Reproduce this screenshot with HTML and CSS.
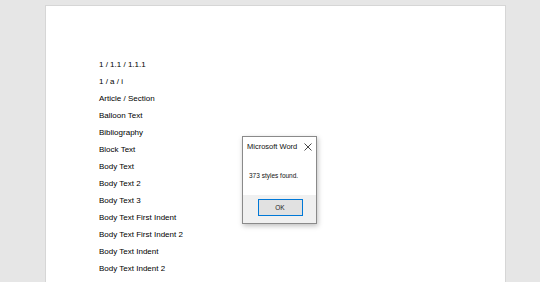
FILE: index.html
```html
<!DOCTYPE html>
<html>
<head>
<meta charset="utf-8">
<link rel="stylesheet" href="styles.css">
</head>
<body>
<div class="page">
  <ul class="styles">
    <li>1 / 1.1 / 1.1.1</li>
    <li>1 / a / i</li>
    <li>Article / Section</li>
    <li>Balloon Text</li>
    <li>Bibliography</li>
    <li>Block Text</li>
    <li>Body Text</li>
    <li>Body Text 2</li>
    <li>Body Text 3</li>
    <li>Body Text First Indent</li>
    <li>Body Text First Indent 2</li>
    <li>Body Text Indent</li>
    <li>Body Text Indent 2</li>
  </ul>
</div>
<div class="dialog">
  <div class="title">
    <span>Microsoft Word</span>
    <svg class="close" width="8" height="8" viewBox="0 0 8 8"><path d="M0.5 0.5L7.5 7.5M7.5 0.5L0.5 7.5" stroke="#333" stroke-width="0.9" fill="none"/></svg>
  </div>
  <div class="msg">373 styles found.</div>
  <div class="footer"><button class="ok">OK</button></div>
</div>
</body>
</html>
```
FILE: styles.css
```css
html, body { margin: 0; padding: 0; }
body {
  background: #e6e6e6;
  width: 540px;
  height: 282px;
  overflow: hidden;
  font-family: "Liberation Sans", Arial, sans-serif;
  color: #222;
}
.page {
  margin: 5px 0 0 45px;
  width: 461px;
  height: 290px;
  background: #fff;
  border: 1px solid #d6d6d6;
  box-sizing: border-box;
  padding: 50px 0 0 53px;
}
.styles {
  list-style: none;
  margin: 0;
  padding: 0;
  font-size: 8px;
  line-height: 17px;
  color: #000;
}
.dialog {
  position: absolute;
  left: 242px;
  top: 136px;
  width: 75px;
  height: 88px;
  box-sizing: border-box;
  border: 1px solid #8a8a8a;
  background: #fff;
  box-shadow: 1px 2px 5px rgba(0,0,0,0.25);
  display: flex;
  flex-direction: column;
}
.title {
  display: flex;
  justify-content: space-between;
  align-items: center;
  padding: 2px 4px 0 4px;
  height: 17px;
  box-sizing: border-box;
  font-size: 7.5px;
  white-space: nowrap;
  color: #111;
}
.msg {
  padding: 18px 0 0 6px;
  height: 41px;
  box-sizing: border-box;
  font-size: 6.5px;
  white-space: nowrap;
  color: #111;
}
.footer {
  flex: 1;
  background: #f0f0f0;
  display: flex;
  justify-content: center;
  padding-top: 4px;
}
.ok {
  width: 45px;
  height: 17px;
  margin-left: 1px;
  border: 1px solid #0078d7;
  background: #e1e1e1;
  font-family: inherit;
  font-size: 6.5px;
  padding: 0;
  color: #222;
}
```
